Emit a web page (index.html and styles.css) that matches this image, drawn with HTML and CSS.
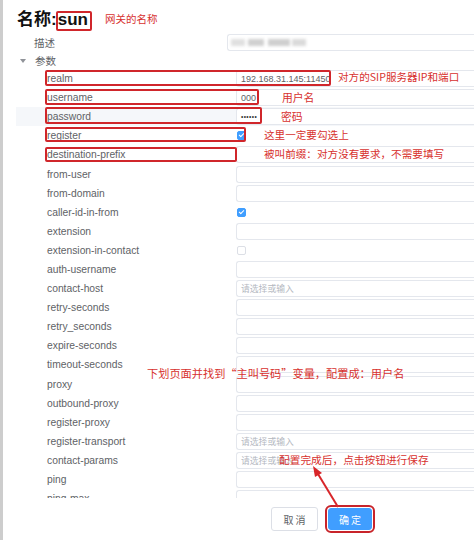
FILE: index.html
```html
<!DOCTYPE html>
<html>
<head>
<meta charset="utf-8">
<link rel="stylesheet" href="styles.css">
</head>
<body>
<div class="page">
  <h1 class="title">名称:<span class="name">sun</span></h1>

  <div class="desc-row">
    <span class="desc-label">描述</span>
    <div class="desc-input"><i class="blur b1"></i><i class="blur b2"></i><i class="blur b3"></i><i class="blur b4"></i></div>
  </div>

  <div class="params-head"><span class="caret"></span><span>参数</span></div>

  <div class="rows">
    <div class="row"><span class="label">realm</span><div class="input"><span class="val">192.168.31.145:11450</span></div></div>
    <div class="row"><span class="label">username</span><div class="input"><span class="val">000</span></div></div>
    <div class="row hover"><span class="label">password</span><div class="input"><span class="val dots">••••••</span></div></div>
    <div class="row"><span class="label">register</span><div class="cell"><span class="check on"></span></div></div>
    <div class="row"><span class="label">destination-prefix</span><div class="input"></div></div>
    <div class="row"><span class="label">from-user</span><div class="input"></div></div>
    <div class="row"><span class="label">from-domain</span><div class="input"></div></div>
    <div class="row"><span class="label">caller-id-in-from</span><div class="cell"><span class="check on"></span></div></div>
    <div class="row"><span class="label">extension</span><div class="input"></div></div>
    <div class="row"><span class="label">extension-in-contact</span><div class="cell"><span class="check"></span></div></div>
    <div class="row"><span class="label">auth-username</span><div class="input"></div></div>
    <div class="row"><span class="label">contact-host</span><div class="input"><span class="ph">请选择或输入</span></div></div>
    <div class="row"><span class="label">retry-seconds</span><div class="input"></div></div>
    <div class="row"><span class="label">retry_seconds</span><div class="input"></div></div>
    <div class="row"><span class="label">expire-seconds</span><div class="input"></div></div>
    <div class="row"><span class="label">timeout-seconds</span><div class="input"></div></div>
    <div class="row"><span class="label">proxy</span><div class="input"></div></div>
    <div class="row"><span class="label">outbound-proxy</span><div class="input"></div></div>
    <div class="row"><span class="label">register-proxy</span><div class="input"></div></div>
    <div class="row"><span class="label">register-transport</span><div class="input"><span class="ph">请选择或输入</span></div></div>
    <div class="row"><span class="label">contact-params</span><div class="input"><span class="ph">请选择或输入</span></div></div>
    <div class="row"><span class="label">ping</span><div class="input"></div></div>
    <div class="row"><span class="label">ping-max</span><div class="input"></div></div>
  </div>

  <div class="footer">
    <button class="btn cancel">取 消</button>
    <button class="btn ok">确 定</button>
  </div>

  <!-- annotations overlaid on the screenshot -->
  <div class="mark m-sun"></div>
  <div class="mark m-realm"></div>
  <div class="mark m-user"></div>
  <div class="mark m-pass"></div>
  <div class="mark m-reg"></div>
  <div class="mark m-dest"></div>

  <span class="note n-name">网关的名称</span>
  <span class="note n-realm">对方的SIP服务器IP和端口</span>
  <span class="note n-user">用户名</span>
  <span class="note n-pass">密码</span>
  <span class="note n-reg">这里一定要勾选上</span>
  <span class="note n-dest">被叫前缀：对方没有要求，不需要填写</span>
  <span class="note n-scroll">下划页面并找到“主叫号码”变量，配置成：用户名</span>
  <span class="note n-save">配置完成后，点击按钮进行保存</span>

  <svg class="arrow" width="40" height="50" viewBox="0 0 40 50">
    <line x1="33" y1="45" x2="13" y2="12" stroke="#d8262a" stroke-width="2"/>
    <polygon points="8,4 17,11 10,15" fill="#d8262a"/>
  </svg>
</div>
</body>
</html>
```
FILE: styles.css
```css
* { box-sizing: border-box; }
html, body { margin: 0; padding: 0; background: #fff; }
.page {
  position: relative;
  width: 474px;
  height: 540px;
  overflow: hidden;
  box-shadow: inset 3px 0 0 #cdcdcd;
  font-family: "Liberation Sans", "Noto Sans CJK SC", sans-serif;
  color: #606266;
}
.title {
  margin: 0;
  padding: 9px 0 0 17px;
  height: 32px;
  font-size: 17px;
  line-height: 21px;
  font-weight: bold;
  color: #111;
}
.name { font-family: "Liberation Sans", sans-serif; margin-left: 1px; }

.desc-row {
  display: flex;
  align-items: center;
  height: 19px;
  margin-top: 1px;
  padding-left: 34px;
  font-size: 10.5px;
}
.desc-label { width: 193px; color: #606266; }
.desc-input {
  position: relative;
  flex: 1;
  height: 17px;
  border: 1px solid #e4e7ed;
  border-right: none;
  border-radius: 3px 0 0 3px;
}
.blur { position: absolute; top: 4px; height: 7px; background: #c8c8c8; filter: blur(1.5px); }
.b1 { left: 3px; width: 14px; background: #e0e0e0; }
.b2 { left: 20px; width: 16px; background: #d0d0d0; }
.b3 { left: 40px; width: 22px; background: #cfcfcf; }
.b4 { left: 64px; width: 14px; background: #dadada; }

.params-head {
  display: flex;
  align-items: center;
  height: 17px;
  padding-left: 20px;
  font-size: 10.5px;
}
.caret {
  width: 0; height: 0;
  margin-right: 9px;
  border-left: 3px solid transparent;
  border-right: 3px solid transparent;
  border-top: 4px solid #909399;
}

.rows {
  height: 429px;
  overflow: hidden;
}
.row {
  display: flex;
  align-items: center;
  height: 19.1px;
  padding-left: 47px;
  font-size: 10.3px;
}
.row.hover { background: #f5f7fa; margin-left: 16px; padding-left: 31px; }
.label { width: 189px; color: #606266; white-space: nowrap; }
.input {
  flex: 1;
  display: flex;
  align-items: center;
  height: 17px;
  padding-left: 4px;
  border: 1px solid #e4e7ed;
  border-right: none;
  border-radius: 3px 0 0 3px;
  background: #fff;
}
.cell { flex: 1; display: flex; align-items: center; }
.val { font-size: 9px; color: #606266; }
.dots { font-size: 6.5px; letter-spacing: 0.4px; color: #333; }
.ph { font-size: 8.8px; color: #b4b8bf; font-family: "Noto Sans CJK SC", sans-serif; }
.check {
  position: relative;
  width: 9px; height: 9px;
  border: 1px solid #dcdfe6;
  border-radius: 2px;
  background: #fff;
  margin-left: 1px;
}
.check.on { background: #409eff; border-color: #409eff; }
.check.on::after {
  content: "";
  position: absolute;
  left: 2px; top: 0px;
  width: 2px; height: 4px;
  border: solid #fff;
  border-width: 0 1px 1px 0;
  transform: rotate(45deg);
}

.footer {
  display: flex;
  gap: 10px;
  padding: 9px 0 0 271px;
}
.btn {
  height: 24px;
  width: 47px;
  border-radius: 3px;
  font-family: "Noto Sans CJK SC", sans-serif;
  font-size: 10px;
  padding: 0;
  cursor: pointer;
}
.cancel { background: #fff; border: 1px solid #dcdfe6; color: #606266; }
.ok {
  background: #409eff;
  border: 1px solid #409eff;
  color: #fff;
  width: 44px;
  height: 22px;
  margin-top: 1px;
  outline: 2px solid #c8242a;
  outline-offset: 1px;
}

.mark { position: absolute; border: 2px solid #d0262b; border-radius: 2px; }
.m-sun { left: 56px; top: 11px; width: 36px; height: 20px; }
.m-realm { left: 45px; top: 70px; width: 286px; height: 16px; }
.m-user { left: 45px; top: 89px; width: 214px; height: 16px; }
.m-pass { left: 45px; top: 107px; width: 217px; height: 17px; }
.m-reg { left: 45px; top: 127px; width: 201px; height: 15px; }
.m-dest { left: 45px; top: 147px; width: 192px; height: 15px; }

.note {
  position: absolute;
  font-family: "Noto Sans CJK SC", sans-serif;
  font-size: 10.8px;
  line-height: 14px;
  color: #d7312e;
  white-space: nowrap;
}
.n-name { left: 105px; top: 12px; font-size: 10.5px; }
.n-realm { left: 338px; top: 70px; font-size: 10.6px; }
.n-user { left: 282px; top: 90px; }
.n-pass { left: 281px; top: 109px; }
.n-reg { left: 264px; top: 128px; font-size: 10.6px; }
.n-dest { left: 264px; top: 147px; font-size: 10.6px; }
.n-scroll { left: 147px; top: 366px; font-size: 11.2px; }
.n-save { left: 279px; top: 453px; font-size: 10.7px; }
.arrow { position: absolute; left: 305px; top: 462px; }
```
